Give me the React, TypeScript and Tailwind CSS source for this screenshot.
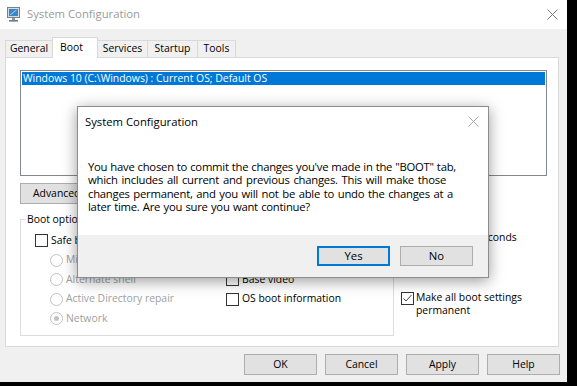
import React from "react";

function MonitorIcon() {
  return (
    <svg width="13" height="15" viewBox="0 0 13 15" className="ml-[7px] shrink-0">
      <rect x="0.5" y="0.5" width="12" height="10" fill="#d5dbe1" stroke="#74818e" />
      <rect x="2" y="2" width="9" height="7" fill="#3d86c6" />
      <path d="M3 8 L9.5 3" stroke="#a9d2f5" strokeWidth="1" />
      <rect x="5" y="11" width="3" height="2" fill="#8d98a3" />
      <rect x="2" y="13" width="9" height="1.6" fill="#6f7b87" />
    </svg>
  );
}

function CloseX({ color, className }: { color: string; className?: string }) {
  return (
    <svg width="11" height="11" viewBox="0 0 11 11" className={className}>
      <path d="M0.5 0.5 L10.5 10.5 M10.5 0.5 L0.5 10.5" stroke={color} strokeWidth="1" />
    </svg>
  );
}

function CheckBox({ checked = false }: { checked?: boolean }) {
  return (
    <div className="w-[13px] h-[13px] border border-[#333333] bg-white shrink-0 flex items-center justify-center">
      {checked && (
        <svg width="11" height="11" viewBox="0 0 11 11">
          <path d="M1.5 5.5 L4 8 L9.5 2" stroke="#444444" strokeWidth="1" fill="none" />
        </svg>
      )}
    </div>
  );
}

function Radio({ checked = false }: { checked?: boolean }) {
  return (
    <div className="w-[13px] h-[13px] rounded-full border border-[#c2c2c2] bg-white shrink-0 flex items-center justify-center">
      {checked && <div className="w-[5px] h-[5px] rounded-full bg-[#c2c2c2]" />}
    </div>
  );
}

function WinButton({ label }: { label: string }) {
  return (
    <div className="w-[73px] h-[21px] border border-[#adadad] bg-[#e1e1e1] flex items-center justify-center shrink-0">
      {label}
    </div>
  );
}

export default function App() {
  return (
    <div className="relative w-[577px] h-[386px] bg-black overflow-hidden font-['Open_Sans','Noto_Sans',sans-serif] text-[10.4px] text-black">
      <div className="w-[567px] h-[382px] bg-[#f0f0f0] flex flex-col">
        {/* Title bar */}
        <div className="h-[29px] bg-white flex items-center shrink-0 text-[11.3px]">
          <MonitorIcon />
          <span className="ml-[7px] text-[#9a9a9a]">System Configuration</span>
          <CloseX color="#7a7a7a" className="ml-auto mr-[9px]" />
        </div>

        <div className="flex flex-col pl-[5px] pt-[8px]">
          {/* Tabs */}
          <div className="flex items-end h-[20px] relative z-10 whitespace-nowrap">
            <div className="w-[48px] h-[17px] border border-b-0 border-[#d9d9d9] bg-[#f0f0f0] flex items-center justify-center">
              General
            </div>
            <div className="w-[46px] h-[21px] -mb-px -ml-px border border-b-0 border-[#d9d9d9] bg-white flex items-start pt-[2px] pl-[7px]">
              Boot
            </div>
            <div className="w-[51px] h-[17px] -ml-px border border-b-0 border-[#d9d9d9] bg-[#f0f0f0] flex items-center justify-center">
              Services
            </div>
            <div className="w-[51px] h-[17px] -ml-px border border-b-0 border-[#d9d9d9] bg-[#f0f0f0] flex items-center justify-center">
              Startup
            </div>
            <div className="w-[39px] h-[17px] -ml-px border border-b-0 border-[#d9d9d9] bg-[#f0f0f0] flex items-center justify-center">
              Tools
            </div>
          </div>

          {/* Tab pane */}
          <div className="w-[554px] h-[290px] border border-[#d9d9d9] bg-white pl-[14px] pt-[12px] flex flex-col">
            {/* OS list */}
            <div className="w-[527px] h-[106px] border border-[#828790] bg-white p-px">
              <div className="h-[13px] bg-[#0078d7] text-white leading-[13px] pl-[1px] whitespace-nowrap">
                Windows 10 (C:\Windows) : Current OS; Default OS
              </div>
            </div>

            {/* Button under list */}
            <div className="flex mt-[7px]">
              <div className="w-[110px] h-[21px] border border-[#adadad] bg-[#e1e1e1] flex items-center pl-[12px] whitespace-nowrap overflow-hidden">
                Advanced options...
              </div>
            </div>

            {/* Boot options + right column */}
            <div className="flex mt-[7px]">
              <fieldset className="w-[374px] h-[125px] border border-[#dcdcdc] m-0 p-0 pl-[14px]">
                <legend className="ml-[-9px] px-[1px] h-[16px] leading-[16px]">Boot options</legend>
                <div className="flex pt-[4px]">
                  <div className="w-[191px] flex flex-col">
                    <div className="h-[19.5px] flex items-center">
                      <CheckBox />
                      <span className="ml-[3px]">Safe boot</span>
                    </div>
                    {[
                      ["Minimal", false],
                      ["Alternate shell", false],
                      ["Active Directory repair", false],
                      ["Network", true],
                    ].map(([label, checked]) => (
                      <div key={label as string} className="h-[19.5px] flex items-center ml-[15px]">
                        <Radio checked={checked as boolean} />
                        <span className="ml-[3px] text-[#a0a0a0]">{label as string}</span>
                      </div>
                    ))}
                  </div>
                  <div className="flex flex-col">
                    <div className="h-[19.5px]" />
                    <div className="h-[19.5px]" />
                    {["Base video", "OS boot information"].map((l) => (
                      <div key={l} className="h-[19.5px] flex items-center">
                        <CheckBox />
                        <span className="ml-[3px]">{l}</span>
                      </div>
                    ))}
                  </div>
                </div>
              </fieldset>

              <div className="ml-[7px] flex flex-col">
                <div className="h-[16px]" />
                <div className="flex items-center mt-[1px] h-[20px]">
                  <div className="w-[62px] h-[20px]" />
                  <span className="ml-[14px]">seconds</span>
                </div>
                <div className="flex items-start mt-[42.5px]">
                  <div className="mt-[1.5px]">
                    <CheckBox checked />
                  </div>
                  <span className="ml-[2px] leading-[13px] whitespace-nowrap">
                    Make all boot settings
                    <br />
                    permanent
                  </span>
                </div>
              </div>
            </div>
          </div>

          {/* Bottom buttons */}
          <div className="flex justify-end gap-[8px] mt-[7px] pr-[7px]">
            <WinButton label="OK" />
            <WinButton label="Cancel" />
            <WinButton label="Apply" />
            <WinButton label="Help" />
          </div>
        </div>
      </div>

      {/* Confirmation dialog */}
      <div className="absolute left-[77px] top-[106px] w-[412px] h-[172px] border border-[#8c8c8c] bg-white flex flex-col text-[11.3px] shadow-[0_3px_14px_rgba(0,0,0,0.4)]">
        <div className="h-[30px] flex items-center pl-[7px] shrink-0">
          <span>System Configuration</span>
          <CloseX color="#a8a8a8" className="ml-auto mr-[9px] -mt-[1px]" />
        </div>
        <div className="mt-[23px] pl-[10px] leading-[13.33px] tracking-[-0.25px] flex flex-col items-start">
          <p className="w-[368px] text-justify [text-align-last:justify]">
            You have chosen to commit the changes you've made in the "BOOT" tab,
          </p>
          <p className="w-[358px] text-justify [text-align-last:justify]">
            which includes all current and previous changes. This will make those
          </p>
          <p className="w-[365px] text-justify [text-align-last:justify]">
            changes permanent, and you will not be able to undo the changes at a
          </p>
          <p className="w-[222px] text-justify [text-align-last:justify]">
            later time. Are you sure you want continue?
          </p>
        </div>
        <div className="mt-auto h-[42px] bg-[#f0f0f0] flex justify-end items-start pt-[11px] pr-[15px] gap-[10px]">
          <div className="w-[73px] h-[20px] border-2 border-[#0078d7] bg-[#e1e1e1] flex items-center justify-center">
            Yes
          </div>
          <div className="w-[73px] h-[20px] border border-[#adadad] bg-[#e1e1e1] flex items-center justify-center">
            No
          </div>
        </div>
      </div>
    </div>
  );
}
